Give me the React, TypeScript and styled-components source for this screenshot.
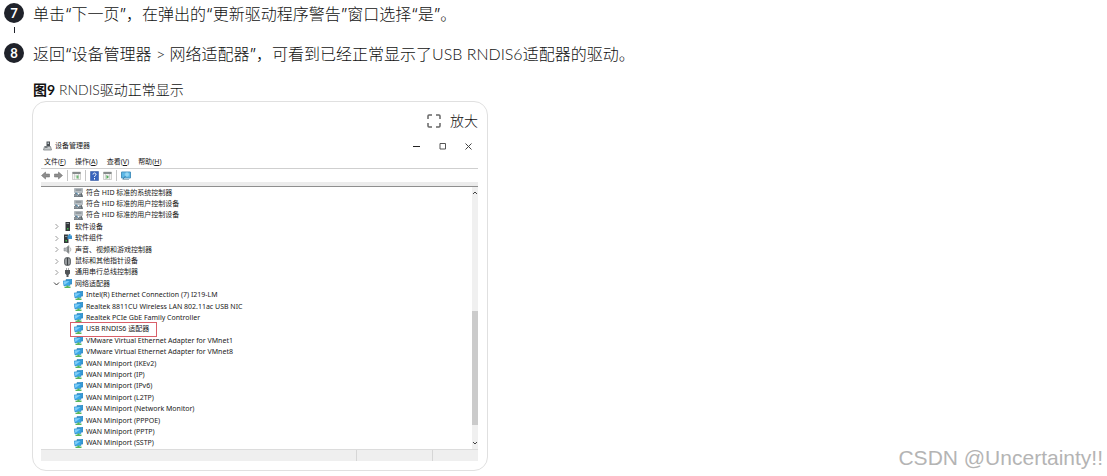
import React from 'react';
import styled, { createGlobalStyle } from 'styled-components';

const GlobalStyle = createGlobalStyle`
  * { box-sizing: border-box; }
  body {
    margin: 0;
    background: #fff;
    color: #111;
    font-family: Lato, "Noto Sans CJK SC", sans-serif;
  }
  button {
    margin: 0;
    padding: 0;
    border: 0;
    background: none;
    color: inherit;
    font: inherit;
    cursor: pointer;
  }
  svg { display: block; flex: none; }
`;

const Page = styled.main`
  position: relative;
  padding: 2px 4px 5px;
`;

const Steps = styled.ol`
  margin: 0;
  padding: 0;
  list-style: none;
`;

const Step = styled.li`
  display: grid;
  grid-template-columns: 20px minmax(0, 1fr);
  column-gap: 8px;
`;

const Rail = styled.div`
  display: flex;
  flex-direction: column;
  align-items: center;
  padding-top: 1px;
`;

const Badge = styled.span`
  width: 20px;
  height: 20px;
  border-radius: 50%;
  background: #1f222a;
  color: #fff;
  font-size: 13px;
  font-weight: 700;
  line-height: 20px;
  text-align: center;
`;

const Link = styled.span`
  width: 1px;
  height: 6px;
  margin: 4px 0 9px;
  background: #1f222a;
`;

const StepText = styled.p`
  margin: 0;
  padding-left: 1px;
  font-size: 16px;
  font-weight: 300;
  line-height: 24px;
`;

const QuoteMark = styled.span`
  font-family: Inter, sans-serif;
  line-height: 1;
`;

const Figure = styled.figure`
  width: 456px;
  max-width: 100%;
  margin: 14px 0 0;
`;

const Caption = styled.figcaption`
  padding-left: 1px;
  font-size: 14px;
  font-weight: 300;
  line-height: 20px;
  b { font-weight: 700; }
`;

const Card = styled.div`
  margin-top: 1px;
  padding: 9px 9px 9px 8px;
  border: 1px solid #e0e0e0;
  border-radius: 14px;
`;

const ZoomBar = styled.div`
  display: flex;
  justify-content: flex-end;
`;

const ZoomButton = styled.button`
  display: flex;
  align-items: center;
  gap: 9px;
  font-size: 14px;
  font-weight: 300;
  line-height: 20px;
`;

const Manager = styled.section`
  margin-top: 7px;
  color: #1a1a1a;
  font-family: "Noto Sans", "Noto Sans CJK SC", sans-serif;
  font-size: 7px;
  line-height: 10px;
`;

const TitleBar = styled.header`
  display: flex;
  align-items: center;
  justify-content: space-between;
  height: 16px;
  padding: 0 5px 0 2px;
`;

const Title = styled.h2`
  display: flex;
  align-items: center;
  gap: 3px;
  margin: 0;
  font-size: 7px;
  font-weight: 400;
`;

const WindowButtons = styled.div`
  display: flex;
  gap: 17px;
`;

const MenuBar = styled.nav`
  display: flex;
  gap: 9px;
  height: 15px;
  padding: 3px 3px 0;
  border-bottom: 1px solid #cfcfcf;
`;

const MenuButton = styled.button`
  min-width: 22px;
  height: 10px;
  line-height: 10px;
  text-align: left;
  white-space: nowrap;
`;

const Toolbar = styled.div`
  display: flex;
  align-items: center;
  gap: 4px;
  height: 13px;
`;

const Divider = styled.span`
  width: 1px;
  height: 11px;
  background: #c4c4c4;
`;

const Viewport = styled.div`
  display: flex;
  border-top: 1px solid #8f8f8f;
`;

const Band = styled.div`
  height: 4px;
  background: #ececec;
`;

const Tree = styled.ul`
  display: grid;
  grid-auto-rows: 1fr;
  flex: 1;
  min-width: 0;
  height: 262px;
  margin: 0;
  padding: 0;
  list-style: none;
`;

const Row = styled.li<{ $level: number }>`
  display: flex;
  align-items: center;
  gap: 3px;
  min-height: 0;
  padding-left: ${(p) => (p.$level === 1 ? 12 : 33)}px;
  white-space: nowrap;
`;

const Label = styled.span<{ $marked?: boolean }>`
  position: relative;
  line-height: 10px;
  ${(p) =>
    p.$marked &&
    `&::after {
      content: '';
      position: absolute;
      inset: -2px -8px -3px -16px;
      border: 1px solid #d9606a;
    }`}
`;

const ScrollBar = styled.div`
  display: flex;
  flex-direction: column;
  align-items: center;
  justify-content: space-between;
  width: 6px;
  background: #f0f0f0;
  button { padding: 3px 0; }
`;

const Thumb = styled.div`
  width: 6px;
  height: 114px;
  margin-top: 113px;
  margin-bottom: auto;
  background: #cbcbcb;
`;

const StatusBar = styled.footer`
  display: grid;
  grid-template-columns: 1fr 76px 46px;
  height: 12px;
  border-top: 1px solid #dcdcdc;
  background: #efefef;
  span + span { border-left: 1px solid #d6d6d6; }
`;

const Watermark = styled.div`
  position: absolute;
  right: 4px;
  bottom: 4px;
  color: #b4b4b4;
  font-family: "Liberation Sans", sans-serif;
  font-size: 21px;
  line-height: 28px;
  text-shadow: -1px -1px 0 #fff;
`;

type Kind = 'hid' | 'device' | 'component' | 'sound' | 'mouse' | 'usb' | 'net';

const Glyph = ({ kind }: { kind: Kind }) => (
  <svg width="9" height="9" viewBox="0 0 18 18" aria-hidden="true">
    {kind === 'hid' && (
      <>
        <path d="M1 1h16v8H1z" fill="#b9c0c5" stroke="#8b9399" />
        <path d="M3 4h12" stroke="#6c757b" strokeWidth="2" />
        <path d="M0 17c0-8 8-8 9-1 1-5 9-5 9 1z" fill="#aeb7bd" stroke="#59636b" strokeWidth="1.5" />
        <path d="M4 10v6M12 10v7M15 10v7" stroke="#4c555b" strokeWidth="1.5" />
        <path d="M4 9l4 4" stroke="#3f8fc4" strokeWidth="2" />
      </>
    )}
    {kind === 'device' && (
      <>
        <rect x="5" y="0" width="9" height="18" fill="#34383b" />
        <path d="M7 3h5" stroke="#8b9296" strokeWidth="2" />
        <rect x="8" y="12" width="3" height="3" fill="#45bd4c" />
      </>
    )}
    {kind === 'component' && (
      <>
        <rect x="2" y="1" width="9" height="17" fill="#34383b" />
        <path d="M4 5h5" stroke="#8b9296" strokeWidth="2" />
        <rect x="5" y="12" width="3" height="3" fill="#45bd4c" />
        <path d="M9 3h3V0h3v3h3v7H9z" fill="#3d93cf" />
      </>
    )}
    {kind === 'sound' && (
      <>
        <path d="M2 6h4l6-5v16l-6-5H2z" fill="#b4b8ba" stroke="#7c8184" />
        <path d="M10 3v12" stroke="#5f6467" strokeWidth="2" />
        <path d="M14 5c2 2 2 6 0 8" fill="none" stroke="#8d9194" strokeWidth="1.5" />
      </>
    )}
    {kind === 'mouse' && (
      <>
        <rect x="3" y="1" width="12" height="16" rx="5" fill="#85898c" stroke="#505558" strokeWidth="1.5" />
        <path d="M9 2v14" stroke="#3d4245" strokeWidth="2" />
        <path d="M6 4v10M12 4v10" stroke="#c3c7c9" />
      </>
    )}
    {kind === 'usb' && (
      <path d="M6 0h1v4h4V0h1v4h2v7l-3 3v4H7v-4l-3-3V4h2z" fill="#515558" />
    )}
    {kind === 'net' && (
      <>
        <path d="M6 1l12-1v10l-12 1z" fill="#3e9fd9" stroke="#2878ad" />
        <path d="M0 4l14-1v10L2 14z" fill="#39a7e8" stroke="#2b87c2" />
        <path d="M1 5l12-1L3 12z" fill="#7dcdf8" />
        <path d="M7 13h4v2h4v3H3v-2l4-1z" fill="#58b65b" />
      </>
    )}
  </svg>
);

const Chevron = ({ open }: { open?: boolean }) => (
  <svg width="7" height="7" viewBox="0 0 7 7" fill="none" aria-hidden="true">
    {open ? (
      <path d="M1 2.500l2.500 2.500L6 2.500" stroke="#3c3c3c" />
    ) : (
      <path d="M2.500 1L5 3.500 2.500 6" stroke="#9a9a9a" />
    )}
  </svg>
);

const Arrow = ({ back }: { back?: boolean }) => (
  <svg width="9" height="9" viewBox="0 0 18 18" aria-hidden="true">
    <path
      d={back ? 'M1 9l8-7v4h8v6H9v4z' : 'M17 9L9 2v4H1v6h8v4z'}
      fill="#8e8e8e"
      stroke="#676767"
    />
  </svg>
);

const Panel = ({ play }: { play?: boolean }) => (
  <svg width="9" height="9" viewBox="0 0 18 18" aria-hidden="true">
    <path d="M1 2h16v15H1z" fill="#f4f4f2" stroke="#a9a9a5" />
    <path d="M1 4h16" stroke="#878c8c" strokeWidth="4" />
    <path d="M5 6v11M13 6v11M5 10h8" stroke="#b7bab8" />
    {play ? <path d="M7 8l5 4-5 4z" fill="#51ac58" /> : <path d="M9 9h4v6H9z" fill="#6fbb75" />}
  </svg>
);

const Help = () => (
  <svg width="9" height="10" viewBox="0 0 18 20" fill="none" aria-hidden="true">
    <path d="M1 1h16v18H1z" fill="#3864bd" stroke="#254b99" />
    <path d="M6 7c0-4 6-4 6 0 0 2-3 2-3 5M9 14v3" stroke="#fff" strokeWidth="2" />
  </svg>
);

const Monitor = () => (
  <svg width="10" height="10" viewBox="0 0 20 20" fill="none" aria-hidden="true">
    <path d="M1 2h18v12H1z" fill="#5bb7e6" stroke="#4a94c0" strokeWidth="2" />
    <path d="M3 17h13" stroke="#9fb6c2" strokeWidth="2" />
    <circle cx="12" cy="7" r="4" fill="#94d6f4" stroke="#82c9ea" />
    <path d="M9 10l-5 6" stroke="#3f7fa8" strokeWidth="2" />
  </svg>
);

const Computer = () => (
  <svg width="9" height="10" viewBox="0 0 18 20" fill="none" aria-hidden="true">
    <path d="M7 1h7v10H7z" fill="#4b5054" />
    <path d="M9 3h3v3H9z" fill="#bcc5cb" />
    <path d="M3 11h12l2 7H1z" fill="#c5c9cb" stroke="#777c7f" strokeWidth="1.500" />
    <path d="M4 10h5v4H4z" fill="#777d80" />
  </svg>
);

const devices: { kind: Kind; label: string; level: number; open?: boolean; marked?: boolean }[] = [
  { kind: 'hid', label: '符合 HID 标准的系统控制器', level: 2 },
  { kind: 'hid', label: '符合 HID 标准的用户控制设备', level: 2 },
  { kind: 'hid', label: '符合 HID 标准的用户控制设备', level: 2 },
  { kind: 'device', label: '软件设备', level: 1 },
  { kind: 'component', label: '软件组件', level: 1 },
  { kind: 'sound', label: '声音、视频和游戏控制器', level: 1 },
  { kind: 'mouse', label: '鼠标和其他指针设备', level: 1 },
  { kind: 'usb', label: '通用串行总线控制器', level: 1 },
  { kind: 'net', label: '网络适配器', level: 1, open: true },
  { kind: 'net', label: 'Intel(R) Ethernet Connection (7) I219-LM', level: 2 },
  { kind: 'net', label: 'Realtek 8811CU Wireless LAN 802.11ac USB NIC', level: 2 },
  { kind: 'net', label: 'Realtek PCIe GbE Family Controller', level: 2 },
  { kind: 'net', label: 'USB RNDIS6 适配器', level: 2, marked: true },
  { kind: 'net', label: 'VMware Virtual Ethernet Adapter for VMnet1', level: 2 },
  { kind: 'net', label: 'VMware Virtual Ethernet Adapter for VMnet8', level: 2 },
  { kind: 'net', label: 'WAN Miniport (IKEv2)', level: 2 },
  { kind: 'net', label: 'WAN Miniport (IP)', level: 2 },
  { kind: 'net', label: 'WAN Miniport (IPv6)', level: 2 },
  { kind: 'net', label: 'WAN Miniport (L2TP)', level: 2 },
  { kind: 'net', label: 'WAN Miniport (Network Monitor)', level: 2 },
  { kind: 'net', label: 'WAN Miniport (PPPOE)', level: 2 },
  { kind: 'net', label: 'WAN Miniport (PPTP)', level: 2 },
  { kind: 'net', label: 'WAN Miniport (SSTP)', level: 2 },
];

const menus = [
  ['文件', 'F'],
  ['操作', 'A'],
  ['查看', 'V'],
  ['帮助', 'H'],
];

const Quoted = ({ children }: { children: React.ReactNode }) => (
  <>
    <QuoteMark>“</QuoteMark>
    {children}
    <QuoteMark>”</QuoteMark>
  </>
);

const DeviceManager = () => (
  <Manager>
    <TitleBar>
      <Title>
        <Computer />
        设备管理器
      </Title>
      <WindowButtons>
        <button aria-label="最小化">
          <svg width="9" height="9" viewBox="0 0 9 9"><path d="M1 4.500h7" stroke="#222" /></svg>
        </button>
        <button aria-label="最大化">
          <svg width="9" height="9" viewBox="0 0 9 9"><path d="M2 1.500h5.500v5.500H2z" fill="none" stroke="#555" /></svg>
        </button>
        <button aria-label="关闭">
          <svg width="9" height="9" viewBox="0 0 9 9"><path d="M1.500 1.500l6 6M7.500 1.500l-6 6" stroke="#444" /></svg>
        </button>
      </WindowButtons>
    </TitleBar>
    <MenuBar>
      {menus.map(([name, key]) => (
        <MenuButton key={key}>
          {name}(<u>{key}</u>)
        </MenuButton>
      ))}
    </MenuBar>
    <Toolbar>
      <button aria-label="后退"><Arrow back /></button>
      <button aria-label="前进"><Arrow /></button>
      <Divider />
      <button aria-label="显示控制台树"><Panel /></button>
      <Divider />
      <button aria-label="帮助"><Help /></button>
      <button aria-label="操作窗格"><Panel play /></button>
      <Divider />
      <button aria-label="扫描硬件改动"><Monitor /></button>
    </Toolbar>
    <Band />
    <Viewport>
      <Tree>
        {devices.map((d, i) => (
          <Row key={i} $level={d.level}>
            {d.level === 1 && <Chevron open={d.open} />}
            <Glyph kind={d.kind} />
            <Label $marked={d.marked}>{d.label}</Label>
          </Row>
        ))}
      </Tree>
      <ScrollBar>
        <button aria-label="向上滚动">
          <svg width="6" height="5" viewBox="0 0 6 5"><path d="M1 4l2-2 2 2" fill="none" stroke="#444" /></svg>
        </button>
        <Thumb />
        <button aria-label="向下滚动">
          <svg width="6" height="5" viewBox="0 0 6 5"><path d="M1 1l2 2 2-2" fill="none" stroke="#444" /></svg>
        </button>
      </ScrollBar>
    </Viewport>
    <StatusBar>
      <span />
      <span />
      <span />
    </StatusBar>
  </Manager>
);

export default function App() {
  return (
    <Page>
      <GlobalStyle />
      <Steps>
        <Step>
          <Rail>
            <Badge>7</Badge>
            <Link />
          </Rail>
          <StepText>
            单击<Quoted>下一页</Quoted>，在弹出的<Quoted>更新驱动程序警告</Quoted>窗口选择<Quoted>是</Quoted>。
          </StepText>
        </Step>
        <Step>
          <Rail>
            <Badge>8</Badge>
          </Rail>
          <div>
            <StepText>
              返回<Quoted>设备管理器 &gt; 网络适配器</Quoted>，可看到已经正常显示了USB RNDIS6适配器的驱动。
            </StepText>
            <Figure>
              <Caption>
                <b>图9</b> RNDIS驱动正常显示
              </Caption>
              <Card>
                <ZoomBar>
                  <ZoomButton>
                    <svg width="14" height="14" viewBox="0 0 14 14" fill="none" aria-hidden="true">
                      <path
                        d="M1 5V2a1 1 0 0 1 1-1h3M9 1h3a1 1 0 0 1 1 1v3M13 9v3a1 1 0 0 1-1 1H9M5 13H2a1 1 0 0 1-1-1V9"
                        stroke="#666"
                        strokeWidth="1.500"
                      />
                    </svg>
                    放大
                  </ZoomButton>
                </ZoomBar>
                <DeviceManager />
              </Card>
            </Figure>
          </div>
        </Step>
      </Steps>
      <Watermark>CSDN @Uncertainty!!</Watermark>
    </Page>
  );
}
